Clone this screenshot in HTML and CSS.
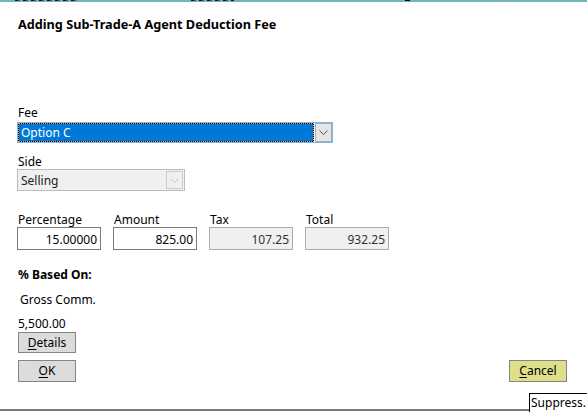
FILE: index.html
```html
<!DOCTYPE html>
<html>
<head>
<meta charset="utf-8">
<link rel="stylesheet" href="styles.css">
</head>
<body>
<div class="topstrip">
  <span class="frag frag-date"></span>
  <span class="sep sep-1"></span>
  <span class="frag frag-num"></span>
  <span class="sep sep-2"></span>
  <span class="frag frag-blk"></span>
  <span class="sep sep-3"></span>
</div>
<div class="dialog">
  <div class="title">Adding Sub-Trade-A Agent Deduction Fee</div>

  <div class="label fee-label">Fee</div>
  <div class="combo combo-fee">
    <div class="combo-text selected"><span>Option C</span></div>
    <div class="combo-btn">
      <svg width="9" height="5" viewBox="0 0 9 5"><polyline points="0.5,0.5 4.5,4.5 8.5,0.5" fill="none" stroke="#555" stroke-width="1"/></svg>
    </div>
  </div>

  <div class="label side-label">Side</div>
  <div class="combo combo-side">
    <div class="combo-text"><span>Selling</span></div>
    <div class="combo-btn disabled">
      <svg width="9" height="5" viewBox="0 0 9 5"><polyline points="0.5,0.5 4.5,4.5 8.5,0.5" fill="none" stroke="#c4c4c4" stroke-width="1"/></svg>
    </div>
  </div>

  <div class="amounts">
    <div class="amt">
      <div class="label">Percentage</div>
      <div class="box">15.00000</div>
    </div>
    <div class="amt">
      <div class="label">Amount</div>
      <div class="box">825.00</div>
    </div>
    <div class="amt">
      <div class="label">Tax</div>
      <div class="box readonly">107.25</div>
    </div>
    <div class="amt">
      <div class="label">Total</div>
      <div class="box readonly">932.25</div>
    </div>
  </div>

  <div class="label based">% Based On:</div>
  <div class="label gross">Gross Comm.</div>
  <div class="label base-value">5,500.00</div>
  <button class="btn details"><u>D</u>etails</button>

  <div class="footer">
    <button class="btn ok"><u>O</u>K</button>
    <button class="btn cancel"><u>C</u>ancel</button>
  </div>

  <div class="statusbar">
    <div class="status-fill"></div>
    <div class="suppress">Suppress.</div>
  </div>
</div>
</body>
</html>
```

FILE: styles.css
```css
html, body {
  margin: 0;
  padding: 0;
}
body {
  width: 587px;
  height: 412px;
  overflow: hidden;
  background: #ffffff;
  font-family: "Noto Sans", "Open Sans", sans-serif;
  font-size: 12px;
  color: #000;
  display: flex;
  flex-direction: column;
}

.topstrip {
  height: 2px;
  flex: none;
  background: #6fb6b4;
  display: flex;
  align-items: flex-start;
}
.frag {
  height: 1px;
  background: repeating-linear-gradient(90deg, #1a1a1a 0 3px, #5a4a7a 3px 5px, #6fb6b4 5px 8px);
}
.frag-date { margin-left: 15px; width: 61px; }
.frag-num { margin-left: 115px; width: 43px; }
.frag-blk { margin-left: 171px; width: 5px; background: #000; }
.sep { width: 1px; height: 2px; background: #a9a9a9; }
.sep-1 { margin-left: 21px; order: 2; }
.sep-2 { order: 4; margin-left: 0; }
.sep-3 { margin-left: 77px; }

.dialog {
  flex: 1;
  display: flex;
  flex-direction: column;
  align-items: flex-start;
  padding-left: 17px;
  padding-right: 20px;
}

.title {
  font-weight: bold;
  font-size: 12.7px;
  line-height: 16px;
  margin: 14px 0 0 1px;
}

.label {
  line-height: 16px;
  padding-top: 1px;
  margin-bottom: -1px;
  padding-left: 1px;
  white-space: nowrap;
}
.fee-label { margin-top: 72px; }
.side-label { margin-top: 10px; }

.combo {
  display: flex;
  box-sizing: border-box;
  border: 1px solid #7eb4ea;
}
.combo-fee {
  margin-top: 2px;
  width: 316px;
  height: 21px;
}
.combo-side {
  width: 168px;
  height: 22px;
  border-color: #bcbcbc;
  background: #f0f0f0;
}
.combo-text {
  flex: 1;
  display: flex;
  align-items: center;
  padding-left: 2px;
  line-height: 16px;
}
.combo-text.selected {
  background: #0078d7;
  color: #fff;
  outline: 1px dotted #f2a04a;
  outline-offset: -1px;
  box-shadow: inset 0 0 0 1px #000;
  padding-left: 3px;
}
.combo-text span { padding-top: 1px; }
.combo-side .combo-text { padding-left: 3px; color: #222; }
.combo-btn {
  width: 17px;
  margin: 1px;
  box-sizing: border-box;
  border: 1px solid #acacac;
  background: #e5e5e5;
  display: flex;
  align-items: center;
  justify-content: center;
}
.combo-fee .combo-btn { margin: 0 0 0 1px; }
.combo-btn.disabled {
  border-color: #cccccc;
  background: #f0f0f0;
}

.amounts {
  margin-top: 20px;
  display: flex;
  gap: 12px;
}
.amt {
  display: flex;
  flex-direction: column;
}
.box {
  width: 84px;
  height: 23px;
  box-sizing: border-box;
  border: 1px solid #7a7a7a;
  text-align: right;
  padding-right: 3px;
  line-height: 22px;
  padding-top: 1px;
}
.box.readonly {
  background: #f0f0f0;
  border-color: #acacac;
  color: #333;
}

.based {
  font-weight: bold;
  margin-top: 16px;
}
.gross {
  margin-top: 9px;
  padding-left: 3px;
}
.base-value {
  margin-top: 8px;
}

.btn {
  font: inherit;
  color: #000;
  width: 58px;
  height: 21px;
  box-sizing: border-box;
  border: 1px solid #858585;
  background: #dcdcdc;
  padding: 0;
  margin: 0;
  line-height: 18px;
}
.btn u { text-decoration-thickness: 1px; text-underline-offset: 2px; }
.details {
  margin-top: 1px;
  margin-left: 1px;
}
.footer {
  margin-top: 7px;
  align-self: stretch;
  display: flex;
  justify-content: space-between;
  padding-left: 1px;
}
.footer .btn { height: 22px; }
.cancel {
  background: #dfdf8b;
}

.statusbar {
  margin-top: auto;
  align-self: stretch;
  margin-left: -17px;
  margin-right: -20px;
  height: 19px;
  display: flex;
}
.status-fill {
  flex: 1;
  border-bottom: 2px solid #7a7a7a;
  margin-bottom: 1px;
}
.suppress {
  width: 58px;
  box-sizing: border-box;
  border-top: 1px solid #000;
  border-left: 1px solid #000;
  padding-left: 1px;
  line-height: 17px;
  font-size: 12px;
  white-space: nowrap;
  overflow: hidden;
}
```
